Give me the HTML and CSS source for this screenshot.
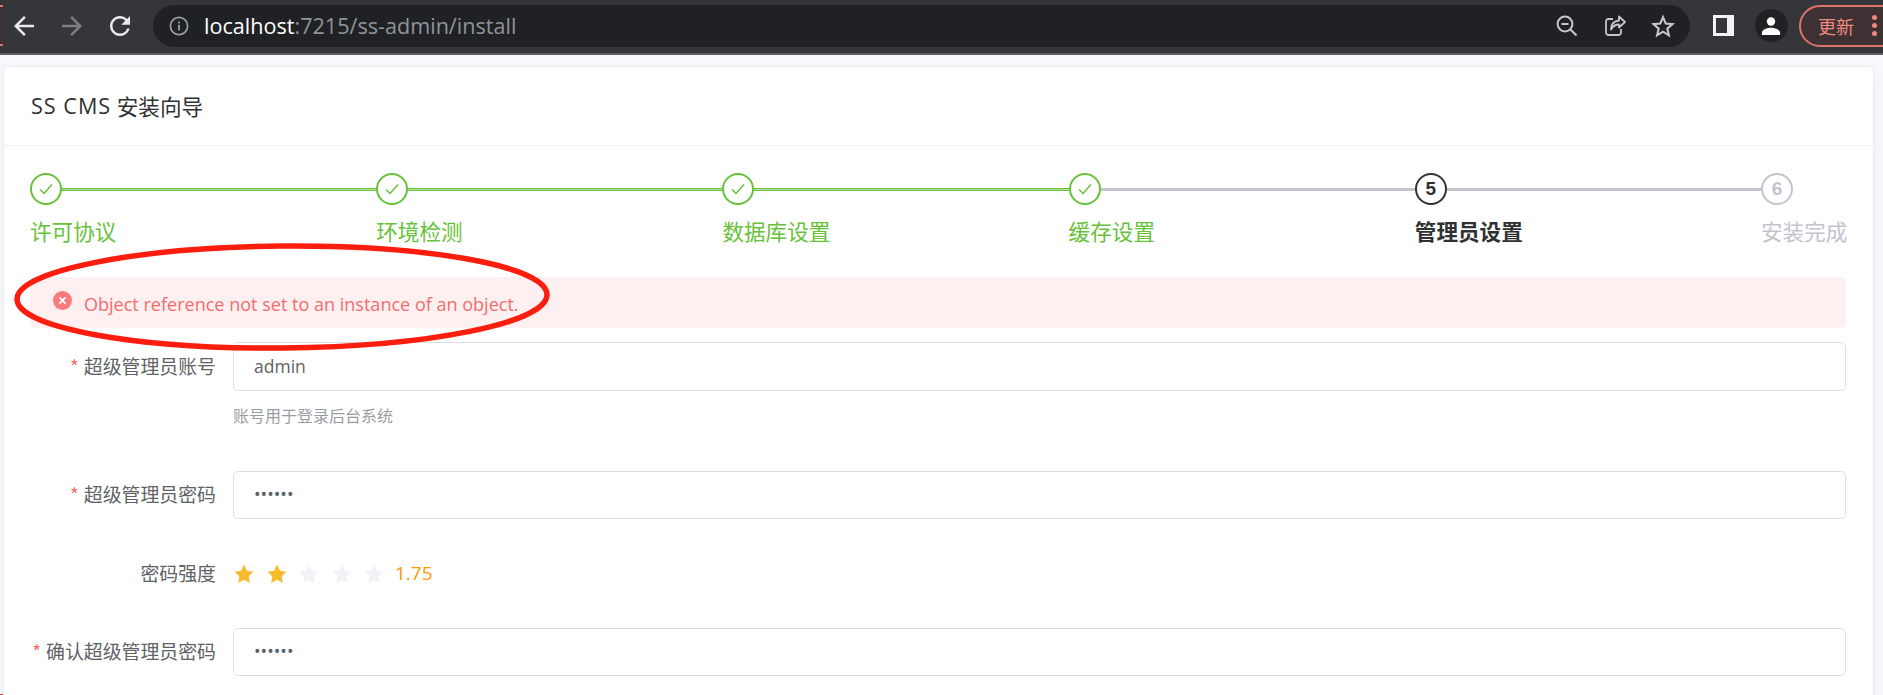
FILE: index.html
```html
<!DOCTYPE html>
<html lang="zh">
<head>
<meta charset="utf-8">
<title>SS CMS 安装向导</title>
<link rel="stylesheet" href="styles.css">
</head>
<body>
<div class="toolbar">
  <span class="tb-btn"><svg class="ic30" viewBox="0 0 24 24"><path fill="#e8eaed" d="M20 11H7.83l5.59-5.59L12 4l-8 8 8 8 1.41-1.41L7.83 13H20v-2z"/></svg></span>
  <span class="tb-btn"><svg class="ic30" viewBox="0 0 24 24"><path fill="#7d7e81" d="M4 11h12.17l-5.59-5.59L12 4l8 8-8 8-1.41-1.41L16.17 13H4v-2z"/></svg></span>
  <span class="tb-btn"><svg class="ic30" viewBox="0 0 24 24"><path fill="#e8eaed" d="M17.65 6.35A7.958 7.958 0 0 0 12 4c-4.42 0-7.99 3.58-7.99 8s3.57 8 7.99 8c3.73 0 6.84-2.55 7.73-6h-2.08A5.99 5.99 0 0 1 12 18c-3.31 0-6-2.69-6-6s2.69-6 6-6c1.66 0 3.14.69 4.22 1.78L13 11h7V4l-2.35 2.35z"/></svg></span>
  <div class="omnibox">
    <svg class="ic-info" viewBox="0 0 20 20"><circle cx="10" cy="10" r="8.6" fill="none" stroke="#9aa0a6" stroke-width="1.7"/><rect x="9.1" y="8.8" width="1.8" height="5.6" fill="#9aa0a6"/><rect x="9.1" y="5.6" width="1.8" height="1.9" fill="#9aa0a6"/></svg>
    <div class="url"><span class="host">localhost</span>:7215/ss-admin/install</div>
    <div class="omni-icons">
      <svg class="ic24" viewBox="0 0 24 24"><circle cx="10" cy="10" r="7.4" fill="none" stroke="#c4c7c9" stroke-width="2"/><path d="M6.5 10h7M15.5 15.5l6 6" fill="none" stroke="#c4c7c9" stroke-width="2"/></svg>
      <svg class="ic24" viewBox="0 0 24 24"><path d="M10 5H5.5A2.5 2.5 0 0 0 3 7.5v11A2.5 2.5 0 0 0 5.5 21h10a2.5 2.5 0 0 0 2.5-2.5V15" fill="none" stroke="#c4c7c9" stroke-width="1.8"/><path d="M16 2.5 22 8l-6 5.5V10.5c-3.500 0-6 1.500-8 5 0-5 3-8.500 8-9V2.500z" fill="none" stroke="#c4c7c9" stroke-width="1.800" stroke-linejoin="round"/></svg>
      <svg class="ic24" viewBox="0 0 24 24"><path d="M12 3.200l2.700 6.300 6.800.6-5.200 4.500 1.600 6.700L12 17.700l-5.900 3.600 1.600-6.700-5.200-4.500 6.800-.6z" fill="none" stroke="#c4c7c9" stroke-width="2.100" stroke-linejoin="miter"/></svg>
    </div>
  </div>
  <span class="tb-btn tb-panel"><span class="panel-icon"><span class="panel-inner"></span></span></span>
  <span class="tb-btn"><span class="avatar"><svg class="ic-person" viewBox="0 0 22 22"><circle cx="11" cy="6" r="4.600" fill="#fff"/><path d="M1 21v-2.500c0-3.500 6-5.500 10-5.500s10 2 10 5.500V21z" fill="#fff"/></svg></span></span>
  <div class="update"><span class="update-text">更新</span><span class="dots"><i></i><i></i><i></i></span></div>
</div>

<div class="card">
  <div class="card-head"><span class="brand">SS CMS</span>&nbsp;安装向导</div>
  <div class="card-body">
    <div class="steps">
      <div class="step done">
        <div class="step-head"><span class="circle"><svg class="check" viewBox="0 0 16 16"><path d="M2 8.500l4 4L14 3.500" fill="none" stroke="#67c23a" stroke-width="1.500"/></svg></span><span class="line"></span></div>
        <div class="step-title">许可协议</div>
      </div>
      <div class="step done">
        <div class="step-head"><span class="circle"><svg class="check" viewBox="0 0 16 16"><path d="M2 8.500l4 4L14 3.500" fill="none" stroke="#67c23a" stroke-width="1.500"/></svg></span><span class="line"></span></div>
        <div class="step-title">环境检测</div>
      </div>
      <div class="step done">
        <div class="step-head"><span class="circle"><svg class="check" viewBox="0 0 16 16"><path d="M2 8.500l4 4L14 3.500" fill="none" stroke="#67c23a" stroke-width="1.500"/></svg></span><span class="line"></span></div>
        <div class="step-title">数据库设置</div>
      </div>
      <div class="step done grey-line">
        <div class="step-head"><span class="circle"><svg class="check" viewBox="0 0 16 16"><path d="M2 8.500l4 4L14 3.500" fill="none" stroke="#67c23a" stroke-width="1.500"/></svg></span><span class="line"></span></div>
        <div class="step-title">缓存设置</div>
      </div>
      <div class="step current">
        <div class="step-head"><span class="circle">5</span><span class="line"></span></div>
        <div class="step-title">管理员设置</div>
      </div>
      <div class="step waiting">
        <div class="step-head"><span class="circle">6</span></div>
        <div class="step-title">安装完成</div>
      </div>
    </div>

    <div class="alert">
      <svg class="alert-icon" viewBox="0 0 20 20"><circle cx="10" cy="10" r="10" fill="#f87c7c"/><path d="M6.800 6.800l6.400 6.400M13.200 6.800l-6.400 6.400" stroke="#fff" stroke-width="1.800"/></svg>
      <span>Object reference not set to an instance of an object.</span>
    </div>

    <form class="form">
      <div class="row">
        <label class="label"><span class="req">*</span>超级管理员账号</label>
        <input class="input input-first" type="text" value="admin">
      </div>
      <div class="hint">账号用于登录后台系统</div>
      <div class="row row-pass">
        <label class="label"><span class="req">*</span>超级管理员密码</label>
        <input class="input" type="password" value="123456">
      </div>
      <div class="row row-rate">
        <label class="label">密码强度</label>
        <div class="rate">
          <svg class="star on" viewBox="0 0 20 20"><path d="M10 .8l2.900 6 6.500.9-4.700 4.600 1.100 6.600L10 15.700l-5.800 3.200 1.100-6.600L.6 7.700l6.500-.9z"/></svg>
          <svg class="star on" viewBox="0 0 20 20"><path d="M10 .8l2.900 6 6.500.9-4.700 4.600 1.100 6.600L10 15.700l-5.800 3.200 1.100-6.600L.6 7.700l6.500-.9z"/></svg>
          <svg class="star" viewBox="0 0 20 20"><path d="M10 .8l2.900 6 6.500.9-4.700 4.600 1.100 6.600L10 15.700l-5.800 3.200 1.100-6.600L.6 7.700l6.500-.9z"/></svg>
          <svg class="star" viewBox="0 0 20 20"><path d="M10 .8l2.900 6 6.500.9-4.700 4.600 1.100 6.600L10 15.700l-5.800 3.200 1.100-6.600L.6 7.700l6.500-.9z"/></svg>
          <svg class="star" viewBox="0 0 20 20"><path d="M10 .8l2.900 6 6.500.9-4.700 4.600 1.100 6.600L10 15.700l-5.800 3.200 1.100-6.600L.6 7.700l6.500-.9z"/></svg>
          <span class="rate-text">1.75</span>
        </div>
      </div>
      <div class="row row-confirm">
        <label class="label"><span class="req">*</span>确认超级管理员密码</label>
        <input class="input" type="password" value="123456">
      </div>
    </form>
  </div>
</div>

<span class="edge-tab"></span>
<span class="edge-pixels"></span>
<svg class="annotation" viewBox="0 0 560 120"><ellipse cx="279" cy="60" rx="265" ry="51" transform="rotate(-0.5 279 60)" fill="none" stroke="#fb1d0e" stroke-width="5.500"/></svg>
</body>
</html>
```

FILE: styles.css
```css
* { box-sizing: border-box; }
html, body { height: 695px; overflow: hidden; }
body {
  margin: 0;
  position: relative;
  background: #f9f9fd;
  font-family: "Noto Sans", "Noto Sans CJK SC", sans-serif;
  color: #303133;
}

.toolbar {
  height: 55px;
  display: flex;
  align-items: center;
  padding-bottom: 2px;
  background: #35363a;
  border-bottom: 2px solid #5b5c60;
  overflow: hidden;
}
.tb-btn {
  flex: 0 0 48px;
  height: 48px;
  display: flex;
  align-items: center;
  justify-content: center;
}
.ic30 { width: 30px; height: 30px; }
.ic24 { width: 24px; height: 24px; }
.omnibox {
  flex: 0 0 1537px;
  height: 42px;
  margin: 0 9px;
  padding: 0 15px 0 16px;
  display: flex;
  align-items: center;
  border-radius: 21px;
  background: #202124;
}
.ic-info { width: 20px; height: 20px; flex: none; }
.url {
  margin-left: 15px;
  font-family: "Open Sans", sans-serif;
  font-size: 21.6px;
  color: #8f949a;
  white-space: nowrap;
}
.host { color: #fff; }
.omni-icons {
  margin-left: auto;
  display: flex;
  gap: 24px;
}
.panel-icon {
  width: 21px;
  height: 21px;
  background: #f1f3f4;
  display: flex;
  align-items: center;
  padding-left: 3px;
}
.panel-inner { width: 11px; height: 15px; background: #35363a; }
.avatar {
  width: 33px;
  height: 33px;
  border-radius: 50%;
  background: #202124;
  display: flex;
  align-items: center;
  justify-content: center;
}
.ic-person { width: 20px; height: 20px; }
.update {
  flex: none;
  width: 110px;
  height: 42px;
  margin-left: 4px;
  padding-left: 17px;
  display: flex;
  align-items: center;
  border: 2px solid #e0736a;
  border-radius: 21px;
  background: #3e3133;
  color: #ee8a80;
  font-family: "Noto Sans CJK SC", sans-serif;
  font-size: 18px;
}
.dots { display: flex; flex-direction: column; gap: 3px; margin-left: 18px; }
.dots i { width: 5px; height: 5px; border-radius: 50%; background: #ee8a80; }

.card {
  height: 640px;
  margin: 11px 9px 0 3px;
  background: #fff;
  border: 1px solid #ebeef5;
  border-radius: 5px;
  box-shadow: 0 2px 12px rgba(0, 0, 0, .05);
  overflow: hidden;
}
.card-head {
  height: 79px;
  padding: 0 0 2px 27px;
  display: flex;
  align-items: center;
  border-bottom: 1px solid #ebeef5;
  font-size: 21.6px;
  font-family: "Open Sans", "Noto Sans CJK SC", sans-serif;
  color: #303133;
}
.brand { letter-spacing: 1px; }
.card-body { padding: 27px 27px 0 26px; }

.steps {
  display: grid;
  grid-template-columns: repeat(5, 1fr) 85px;
}
.step-head { display: flex; align-items: center; height: 32px; }
.circle {
  flex: none;
  width: 32px;
  height: 32px;
  border: 2px solid currentColor;
  border-radius: 50%;
  display: flex;
  align-items: center;
  justify-content: center;
  font-family: "Liberation Sans", sans-serif;
  font-size: 19px;
  font-weight: 700;
  background: #fff;
}
.check { width: 16px; height: 16px; }
.line { flex: 1; height: 3px; background: #c0c4cc; }
.step-title {
  margin-top: 10px;
  line-height: 32px;
  font-size: 21.6px;
  font-family: "Noto Sans CJK SC", sans-serif;
  white-space: nowrap;
}
.done { color: #67c23a; }
.done .line {
  background: #b9dfa6;
  border-top: 1px solid #67c23a;
  border-bottom: 1px solid #67c23a;
}
.grey-line .line { background: #c0c4cc; border: 0; }
.current { color: #303133; }
.current .step-title { font-weight: 700; }
.waiting { color: #c0c4cc; }

.alert {
  margin-top: 30px;
  height: 51px;
  padding: 2px 0 0 24px;
  display: flex;
  align-items: center;
  gap: 12px;
  border-radius: 5px;
  background: #fef0f0;
  color: #f56c6c;
  font-family: "Open Sans", sans-serif;
  font-size: 18.05px;
}
.alert-icon { width: 19px; height: 19px; flex: none; margin: -6px 0 0 -1px; }

.form { margin-top: 14px; }
.row {
  display: grid;
  grid-template-columns: 186px 1fr;
  column-gap: 17px;
  align-items: center;
  min-height: 48px;
}
.label {
  padding: 0 0 3px;
  text-align: right;
  font-size: 18.9px;
  font-family: "Noto Sans CJK SC", sans-serif;
  color: #606266;
  white-space: nowrap;
}
.req { color: #f56c6c; margin-right: 5px; }
.input {
  width: 100%;
  height: 48px;
  padding: 0 20px 2px;
  border: 1px solid #dcdfe6;
  border-radius: 5px;
  background: #fff;
  font-family: "Open Sans", sans-serif;
  font-size: 17.5px;
  color: #606266;
  outline: none;
}
.input-first { height: 49px; }
.hint {
  margin: 10px 0 0 203px;
  line-height: 28px;
  font-size: 16px;
  font-family: "Noto Sans CJK SC", sans-serif;
  color: #9a9da3;
}
.row-pass { margin-top: 42px; }
.row-rate { margin-top: 31px; }
.row-confirm { margin-top: 30px; }
.rate { display: flex; align-items: center; padding-left: 1px; }
.star { width: 20px; height: 20px; margin-right: 12.6px; fill: #eff2f7; }
.star.on { fill: #f7ba2a; }
.rate-text {
  margin: -2px 0 0 -2px;
  font-family: "Open Sans", sans-serif;
  font-size: 19px;
  color: #ff9900;
}

.annotation {
  position: absolute;
  left: 3px;
  top: 237px;
  width: 560px;
  height: 120px;
  pointer-events: none;
}
.edge-tab {
  position: absolute;
  left: 0;
  top: 5px;
  width: 3px;
  height: 41px;
  background: #3e3133;
  border-top: 2px solid #e0736a;
  border-bottom: 2px solid #e0736a;
}
.edge-pixels {
  position: absolute;
  left: 0;
  top: 694px;
  width: 3px;
  height: 1px;
  background: #e0403a;
}
```
